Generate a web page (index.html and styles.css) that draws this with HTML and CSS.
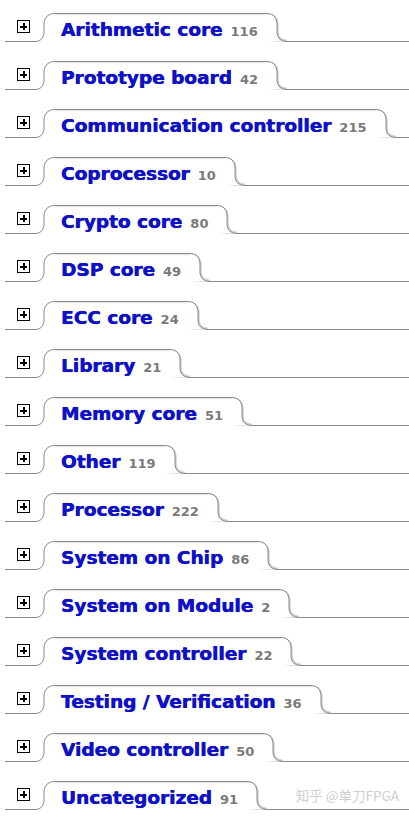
FILE: index.html
```html
<!DOCTYPE html>
<html>
<head>
<meta charset="utf-8">
<link rel="stylesheet" href="styles.css">
</head>
<body>
<ul class="list">
  <li class="row"><span class="plus"></span><span class="tab"><svg class="tab-l" width="20" height="29" viewBox="0 0 20 29"><path class="fill" d="M0 28.5 Q8 28.5 9 20 L9 10 Q10 0.5 20 0.5 L20 29 L0 29Z"/><path class="edge" d="M0 28.5 Q8 28.5 9 20 L9 10 Q10 0.5 20 0.5"/></svg><span class="tab-mid"><span class="name">Arithmetic core</span><span class="count">116</span></span><svg class="tab-r" width="20" height="29" viewBox="0 0 20 29"><path class="shadow" d="M0 2 Q9 2 10 11 L10 20 Q11 28 20 28.5"/><path class="fill" d="M0 0.5 Q9 0.5 10 10 L10 20 Q11 28.5 20 28.5 L0 29Z"/><path class="edge" d="M0 0.5 Q9 0.5 10 10 L10 20 Q11 28.5 20 28.5"/></svg></span></li>
  <li class="row"><span class="plus"></span><span class="tab"><svg class="tab-l" width="20" height="29" viewBox="0 0 20 29"><path class="fill" d="M0 28.5 Q8 28.5 9 20 L9 10 Q10 0.5 20 0.5 L20 29 L0 29Z"/><path class="edge" d="M0 28.5 Q8 28.5 9 20 L9 10 Q10 0.5 20 0.5"/></svg><span class="tab-mid"><span class="name">Prototype board</span><span class="count">42</span></span><svg class="tab-r" width="20" height="29" viewBox="0 0 20 29"><path class="shadow" d="M0 2 Q9 2 10 11 L10 20 Q11 28 20 28.5"/><path class="fill" d="M0 0.5 Q9 0.5 10 10 L10 20 Q11 28.5 20 28.5 L0 29Z"/><path class="edge" d="M0 0.5 Q9 0.5 10 10 L10 20 Q11 28.5 20 28.5"/></svg></span></li>
  <li class="row"><span class="plus"></span><span class="tab"><svg class="tab-l" width="20" height="29" viewBox="0 0 20 29"><path class="fill" d="M0 28.5 Q8 28.5 9 20 L9 10 Q10 0.5 20 0.5 L20 29 L0 29Z"/><path class="edge" d="M0 28.5 Q8 28.5 9 20 L9 10 Q10 0.5 20 0.5"/></svg><span class="tab-mid"><span class="name">Communication controller</span><span class="count">215</span></span><svg class="tab-r" width="20" height="29" viewBox="0 0 20 29"><path class="shadow" d="M0 2 Q9 2 10 11 L10 20 Q11 28 20 28.5"/><path class="fill" d="M0 0.5 Q9 0.5 10 10 L10 20 Q11 28.5 20 28.5 L0 29Z"/><path class="edge" d="M0 0.5 Q9 0.5 10 10 L10 20 Q11 28.5 20 28.5"/></svg></span></li>
  <li class="row"><span class="plus"></span><span class="tab"><svg class="tab-l" width="20" height="29" viewBox="0 0 20 29"><path class="fill" d="M0 28.5 Q8 28.5 9 20 L9 10 Q10 0.5 20 0.5 L20 29 L0 29Z"/><path class="edge" d="M0 28.5 Q8 28.5 9 20 L9 10 Q10 0.5 20 0.5"/></svg><span class="tab-mid"><span class="name">Coprocessor</span><span class="count">10</span></span><svg class="tab-r" width="20" height="29" viewBox="0 0 20 29"><path class="shadow" d="M0 2 Q9 2 10 11 L10 20 Q11 28 20 28.5"/><path class="fill" d="M0 0.5 Q9 0.5 10 10 L10 20 Q11 28.5 20 28.5 L0 29Z"/><path class="edge" d="M0 0.5 Q9 0.5 10 10 L10 20 Q11 28.5 20 28.5"/></svg></span></li>
  <li class="row"><span class="plus"></span><span class="tab"><svg class="tab-l" width="20" height="29" viewBox="0 0 20 29"><path class="fill" d="M0 28.5 Q8 28.5 9 20 L9 10 Q10 0.5 20 0.5 L20 29 L0 29Z"/><path class="edge" d="M0 28.5 Q8 28.5 9 20 L9 10 Q10 0.5 20 0.5"/></svg><span class="tab-mid"><span class="name">Crypto core</span><span class="count">80</span></span><svg class="tab-r" width="20" height="29" viewBox="0 0 20 29"><path class="shadow" d="M0 2 Q9 2 10 11 L10 20 Q11 28 20 28.5"/><path class="fill" d="M0 0.5 Q9 0.5 10 10 L10 20 Q11 28.5 20 28.5 L0 29Z"/><path class="edge" d="M0 0.5 Q9 0.5 10 10 L10 20 Q11 28.5 20 28.5"/></svg></span></li>
  <li class="row"><span class="plus"></span><span class="tab"><svg class="tab-l" width="20" height="29" viewBox="0 0 20 29"><path class="fill" d="M0 28.5 Q8 28.5 9 20 L9 10 Q10 0.5 20 0.5 L20 29 L0 29Z"/><path class="edge" d="M0 28.5 Q8 28.5 9 20 L9 10 Q10 0.5 20 0.5"/></svg><span class="tab-mid"><span class="name">DSP core</span><span class="count">49</span></span><svg class="tab-r" width="20" height="29" viewBox="0 0 20 29"><path class="shadow" d="M0 2 Q9 2 10 11 L10 20 Q11 28 20 28.5"/><path class="fill" d="M0 0.5 Q9 0.5 10 10 L10 20 Q11 28.5 20 28.5 L0 29Z"/><path class="edge" d="M0 0.5 Q9 0.5 10 10 L10 20 Q11 28.5 20 28.5"/></svg></span></li>
  <li class="row"><span class="plus"></span><span class="tab"><svg class="tab-l" width="20" height="29" viewBox="0 0 20 29"><path class="fill" d="M0 28.5 Q8 28.5 9 20 L9 10 Q10 0.5 20 0.5 L20 29 L0 29Z"/><path class="edge" d="M0 28.5 Q8 28.5 9 20 L9 10 Q10 0.5 20 0.5"/></svg><span class="tab-mid"><span class="name">ECC core</span><span class="count">24</span></span><svg class="tab-r" width="20" height="29" viewBox="0 0 20 29"><path class="shadow" d="M0 2 Q9 2 10 11 L10 20 Q11 28 20 28.5"/><path class="fill" d="M0 0.5 Q9 0.5 10 10 L10 20 Q11 28.5 20 28.5 L0 29Z"/><path class="edge" d="M0 0.5 Q9 0.5 10 10 L10 20 Q11 28.5 20 28.5"/></svg></span></li>
  <li class="row"><span class="plus"></span><span class="tab"><svg class="tab-l" width="20" height="29" viewBox="0 0 20 29"><path class="fill" d="M0 28.5 Q8 28.5 9 20 L9 10 Q10 0.5 20 0.5 L20 29 L0 29Z"/><path class="edge" d="M0 28.5 Q8 28.5 9 20 L9 10 Q10 0.5 20 0.5"/></svg><span class="tab-mid"><span class="name">Library</span><span class="count">21</span></span><svg class="tab-r" width="20" height="29" viewBox="0 0 20 29"><path class="shadow" d="M0 2 Q9 2 10 11 L10 20 Q11 28 20 28.5"/><path class="fill" d="M0 0.5 Q9 0.5 10 10 L10 20 Q11 28.5 20 28.5 L0 29Z"/><path class="edge" d="M0 0.5 Q9 0.5 10 10 L10 20 Q11 28.5 20 28.5"/></svg></span></li>
  <li class="row"><span class="plus"></span><span class="tab"><svg class="tab-l" width="20" height="29" viewBox="0 0 20 29"><path class="fill" d="M0 28.5 Q8 28.5 9 20 L9 10 Q10 0.5 20 0.5 L20 29 L0 29Z"/><path class="edge" d="M0 28.5 Q8 28.5 9 20 L9 10 Q10 0.5 20 0.5"/></svg><span class="tab-mid"><span class="name">Memory core</span><span class="count">51</span></span><svg class="tab-r" width="20" height="29" viewBox="0 0 20 29"><path class="shadow" d="M0 2 Q9 2 10 11 L10 20 Q11 28 20 28.5"/><path class="fill" d="M0 0.5 Q9 0.5 10 10 L10 20 Q11 28.5 20 28.5 L0 29Z"/><path class="edge" d="M0 0.5 Q9 0.5 10 10 L10 20 Q11 28.5 20 28.5"/></svg></span></li>
  <li class="row"><span class="plus"></span><span class="tab"><svg class="tab-l" width="20" height="29" viewBox="0 0 20 29"><path class="fill" d="M0 28.5 Q8 28.5 9 20 L9 10 Q10 0.5 20 0.5 L20 29 L0 29Z"/><path class="edge" d="M0 28.5 Q8 28.5 9 20 L9 10 Q10 0.5 20 0.5"/></svg><span class="tab-mid"><span class="name">Other</span><span class="count">119</span></span><svg class="tab-r" width="20" height="29" viewBox="0 0 20 29"><path class="shadow" d="M0 2 Q9 2 10 11 L10 20 Q11 28 20 28.5"/><path class="fill" d="M0 0.5 Q9 0.5 10 10 L10 20 Q11 28.5 20 28.5 L0 29Z"/><path class="edge" d="M0 0.5 Q9 0.5 10 10 L10 20 Q11 28.5 20 28.5"/></svg></span></li>
  <li class="row"><span class="plus"></span><span class="tab"><svg class="tab-l" width="20" height="29" viewBox="0 0 20 29"><path class="fill" d="M0 28.5 Q8 28.5 9 20 L9 10 Q10 0.5 20 0.5 L20 29 L0 29Z"/><path class="edge" d="M0 28.5 Q8 28.5 9 20 L9 10 Q10 0.5 20 0.5"/></svg><span class="tab-mid"><span class="name">Processor</span><span class="count">222</span></span><svg class="tab-r" width="20" height="29" viewBox="0 0 20 29"><path class="shadow" d="M0 2 Q9 2 10 11 L10 20 Q11 28 20 28.5"/><path class="fill" d="M0 0.5 Q9 0.5 10 10 L10 20 Q11 28.5 20 28.5 L0 29Z"/><path class="edge" d="M0 0.5 Q9 0.5 10 10 L10 20 Q11 28.5 20 28.5"/></svg></span></li>
  <li class="row"><span class="plus"></span><span class="tab"><svg class="tab-l" width="20" height="29" viewBox="0 0 20 29"><path class="fill" d="M0 28.5 Q8 28.5 9 20 L9 10 Q10 0.5 20 0.5 L20 29 L0 29Z"/><path class="edge" d="M0 28.5 Q8 28.5 9 20 L9 10 Q10 0.5 20 0.5"/></svg><span class="tab-mid"><span class="name">System on Chip</span><span class="count">86</span></span><svg class="tab-r" width="20" height="29" viewBox="0 0 20 29"><path class="shadow" d="M0 2 Q9 2 10 11 L10 20 Q11 28 20 28.5"/><path class="fill" d="M0 0.5 Q9 0.5 10 10 L10 20 Q11 28.5 20 28.5 L0 29Z"/><path class="edge" d="M0 0.5 Q9 0.5 10 10 L10 20 Q11 28.5 20 28.5"/></svg></span></li>
  <li class="row"><span class="plus"></span><span class="tab"><svg class="tab-l" width="20" height="29" viewBox="0 0 20 29"><path class="fill" d="M0 28.5 Q8 28.5 9 20 L9 10 Q10 0.5 20 0.5 L20 29 L0 29Z"/><path class="edge" d="M0 28.5 Q8 28.5 9 20 L9 10 Q10 0.5 20 0.5"/></svg><span class="tab-mid"><span class="name">System on Module</span><span class="count">2</span></span><svg class="tab-r" width="20" height="29" viewBox="0 0 20 29"><path class="shadow" d="M0 2 Q9 2 10 11 L10 20 Q11 28 20 28.5"/><path class="fill" d="M0 0.5 Q9 0.5 10 10 L10 20 Q11 28.5 20 28.5 L0 29Z"/><path class="edge" d="M0 0.5 Q9 0.5 10 10 L10 20 Q11 28.5 20 28.5"/></svg></span></li>
  <li class="row"><span class="plus"></span><span class="tab"><svg class="tab-l" width="20" height="29" viewBox="0 0 20 29"><path class="fill" d="M0 28.5 Q8 28.5 9 20 L9 10 Q10 0.5 20 0.5 L20 29 L0 29Z"/><path class="edge" d="M0 28.5 Q8 28.5 9 20 L9 10 Q10 0.5 20 0.5"/></svg><span class="tab-mid"><span class="name">System controller</span><span class="count">22</span></span><svg class="tab-r" width="20" height="29" viewBox="0 0 20 29"><path class="shadow" d="M0 2 Q9 2 10 11 L10 20 Q11 28 20 28.5"/><path class="fill" d="M0 0.5 Q9 0.5 10 10 L10 20 Q11 28.5 20 28.5 L0 29Z"/><path class="edge" d="M0 0.5 Q9 0.5 10 10 L10 20 Q11 28.5 20 28.5"/></svg></span></li>
  <li class="row"><span class="plus"></span><span class="tab"><svg class="tab-l" width="20" height="29" viewBox="0 0 20 29"><path class="fill" d="M0 28.5 Q8 28.5 9 20 L9 10 Q10 0.5 20 0.5 L20 29 L0 29Z"/><path class="edge" d="M0 28.5 Q8 28.5 9 20 L9 10 Q10 0.5 20 0.5"/></svg><span class="tab-mid"><span class="name">Testing / Verification</span><span class="count">36</span></span><svg class="tab-r" width="20" height="29" viewBox="0 0 20 29"><path class="shadow" d="M0 2 Q9 2 10 11 L10 20 Q11 28 20 28.5"/><path class="fill" d="M0 0.5 Q9 0.5 10 10 L10 20 Q11 28.5 20 28.5 L0 29Z"/><path class="edge" d="M0 0.5 Q9 0.5 10 10 L10 20 Q11 28.5 20 28.5"/></svg></span></li>
  <li class="row"><span class="plus"></span><span class="tab"><svg class="tab-l" width="20" height="29" viewBox="0 0 20 29"><path class="fill" d="M0 28.5 Q8 28.5 9 20 L9 10 Q10 0.5 20 0.5 L20 29 L0 29Z"/><path class="edge" d="M0 28.5 Q8 28.5 9 20 L9 10 Q10 0.5 20 0.5"/></svg><span class="tab-mid"><span class="name">Video controller</span><span class="count">50</span></span><svg class="tab-r" width="20" height="29" viewBox="0 0 20 29"><path class="shadow" d="M0 2 Q9 2 10 11 L10 20 Q11 28 20 28.5"/><path class="fill" d="M0 0.5 Q9 0.5 10 10 L10 20 Q11 28.5 20 28.5 L0 29Z"/><path class="edge" d="M0 0.5 Q9 0.5 10 10 L10 20 Q11 28.5 20 28.5"/></svg></span></li>
  <li class="row last"><span class="plus"></span><span class="tab"><svg class="tab-l" width="20" height="29" viewBox="0 0 20 29"><path class="fill" d="M0 28.5 Q8 28.5 9 20 L9 10 Q10 0.5 20 0.5 L20 29 L0 29Z"/><path class="edge" d="M0 28.5 Q8 28.5 9 20 L9 10 Q10 0.5 20 0.5"/></svg><span class="tab-mid"><span class="name">Uncategorized</span><span class="count">91</span></span><svg class="tab-r" width="20" height="29" viewBox="0 0 20 29"><path class="shadow" d="M0 2 Q9 2 10 11 L10 20 Q11 28 20 28.5"/><path class="fill" d="M0 0.5 Q9 0.5 10 10 L10 20 Q11 28.5 20 28.5 L0 29Z"/><path class="edge" d="M0 0.5 Q9 0.5 10 10 L10 20 Q11 28.5 20 28.5"/></svg></span><span class="watermark">知乎 @单刀FPGA</span></li>
</ul>
</body>
</html>
```

FILE: styles.css
```css
html, body {
  margin: 0;
  padding: 0;
  background: #ffffff;
}
body {
  width: 409px;
  height: 821px;
  overflow: hidden;
  font-family: "DejaVu Sans", Verdana, sans-serif;
}
.list {
  list-style: none;
  margin: -6px 0 0 5px;
  padding: 0;
}
.row {
  position: relative;
  display: flex;
  align-items: flex-end;
  height: 47px;
  border-bottom: 1px solid #8a8a8a;
}
.plus {
  position: relative;
  box-sizing: border-box;
  width: 13px;
  height: 13px;
  margin: 0 5px 8px 12px;
  border: 1px solid #000;
  background: #fff;
}
.plus::before,
.plus::after {
  content: "";
  position: absolute;
  background: #000;
}
.plus::before {
  left: 2px;
  top: 4.5px;
  width: 7px;
  height: 2px;
}
.plus::after {
  left: 4.5px;
  top: 2px;
  width: 2px;
  height: 7px;
}
.tab {
  display: flex;
  align-items: flex-end;
  height: 29px;
  margin-bottom: -1px;
}
.tab svg {
  display: block;
  flex: none;
}
.tab .fill {
  fill: #fff;
  stroke: none;
}
.tab .edge {
  fill: none;
  stroke: #8a8a8a;
  stroke-width: 1;
}
.tab .shadow {
  fill: none;
  stroke: #d0d0d0;
  stroke-width: 3.5;
}
.tab-mid {
  box-sizing: border-box;
  height: 29px;
  display: flex;
  align-items: baseline;
  padding: 5px 9px 0 6px;
  border-top: 1px solid #8a8a8a;
  box-shadow: inset 0 2px 2px -1px #e0e0e0;
  background: #fff;
  white-space: nowrap;
}
.name {
  font-size: 18.5px;
  font-weight: bold;
  line-height: 22px;
  color: #1010c4;
  text-shadow: 0 0 1px rgba(30, 30, 210, 0.55), 0.3px 0 0 #1010c4;
}
.count {
  margin-left: 8px;
  font-size: 13px;
  font-weight: bold;
  color: #7a7a7a;
}
.watermark {
  position: absolute;
  right: 10px;
  bottom: 4px;
  font-family: "Noto Sans CJK SC", "DejaVu Sans", sans-serif;
  font-size: 13.5px;
  color: #cfcfcf;
}
```
